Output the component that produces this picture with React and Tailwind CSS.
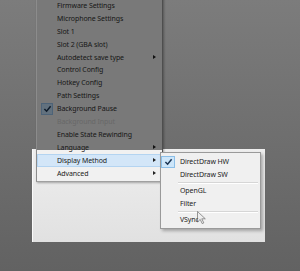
import React from 'react'

const mainItems = [
  { label: 'Firmware Settings' },
  { label: 'Microphone Settings' },
  { label: 'Slot 1' },
  { label: 'Slot 2 (GBA slot)' },
  { label: 'Autodetect save type', sub: true },
  { label: 'Control Config' },
  { label: 'Hotkey Config' },
  { label: 'Path Settings' },
  { label: 'Background Pause', checked: true },
  { label: 'Background Input', disabled: true },
  { label: 'Enable State Rewinding' },
  { label: 'Language', sub: true },
  { label: 'Display Method', sub: true, active: true, lit: true },
  { label: 'Advanced', sub: true, lit: true },
]

const displayItems = [
  { label: 'DirectDraw HW', checked: true },
  { label: 'DirectDraw SW' },
  { sep: true },
  { label: 'OpenGL' },
  { label: 'Filter' },
  { sep: true },
  { label: 'VSync' },
]

function Arrow({ lit }) {
  return (
    <span
      className={`block w-0 h-0 border-y-[2.5px] border-y-transparent border-l-[3px] ${
        lit ? 'border-l-[#222]' : 'border-l-[#111]'
      }`}
    />
  )
}

function Check({ lit, w, h }) {
  return (
    <span
      className={`flex items-center justify-center border ${w} ${h} ${
        lit ? 'bg-[#cde6fa] border-[#8cbfe8]' : 'bg-[#62717e] border-[#4d6378]'
      }`}
    >
      <svg width="9" height="8" viewBox="0 0 10 9">
        <path d="M1.5 4.5 L4 7 L8.5 1.5" fill="none" stroke={lit ? '#1c3553' : '#0f1c2b'} strokeWidth="1.7" />
      </svg>
    </span>
  )
}

function MainRow({ item }) {
  let textColor = item.lit ? 'text-[#1c1c1c]' : 'text-[#161616]'
  if (item.disabled) textColor = 'text-[#686868]'
  return (
    <div
      className={`flex items-center h-[12.9px] ${
        item.active ? 'bg-[#d3e6f8] outline outline-[#b4d4f1] -outline-offset-1' : ''
      }`}
    >
      <div className="w-[20px] h-full flex items-center pl-[4px]">
        {item.checked && <Check lit={item.lit} w="w-[12px]" h="h-[12px]" />}
      </div>
      <span className={`flex-1 leading-none ${textColor}`}>{item.label}</span>
      <div className="w-[9px] flex items-center">{item.sub && <Arrow lit={item.lit} />}</div>
    </div>
  )
}

function SubRow({ item }) {
  if (item.sep) {
    return (
      <div className="h-[3px] flex flex-col justify-center pl-[17px] pr-[2px]">
        <div className="border-t border-[#d6d6d6] border-b border-b-white" />
      </div>
    )
  }
  return (
    <div className="flex items-center h-[13px]">
      <div className="w-[19px] h-full flex items-center">
        {item.checked && <Check lit w="w-[14px]" h="h-[12px]" />}
      </div>
      <span className="leading-none text-[#1c1c1c]">{item.label}</span>
    </div>
  )
}

export default function App() {
  return (
    <div
      className="relative w-[300px] h-[271px] overflow-hidden bg-linear-to-b from-[#7c7c7c] to-[#626262] text-[7px] tracking-[-0.1px]"
      style={{ fontFamily: '"Noto Sans", "Open Sans", sans-serif' }}
    >
      {/* lit area behind the open menus */}
      <div className="absolute left-[32px] top-[149px] w-[233px] h-[93px] bg-linear-to-b from-[#eeeeee] to-[#e1e1e1] border-l border-[#fafafa]" />

      {/* main menu: upper part sits in the dimmed area, lower part in the lit one */}
      <div className="absolute left-[36px] top-[-4px] w-[127px] py-[2px] bg-[linear-gradient(to_bottom,#797979_153px,#f1f1f1_153px)] border border-l-[#8c8c8c] border-r-[#4e4e4e] border-b-[#a0a0a0] border-t-[#505050] shadow-[1px_1px_2px_rgba(0,0,0,0.3)]">
        {mainItems.map(item => (
          <MainRow key={item.label} item={item} />
        ))}
      </div>

      {/* Display Method submenu */}
      <div className="absolute left-[160px] top-[152px] w-[101px] py-[2px] bg-[#f0f0f0] border border-[#9a9a9a] shadow-[2px_2px_3px_rgba(0,0,0,0.28)]">
        {displayItems.map((item, i) => (
          <SubRow key={i} item={item} />
        ))}
      </div>

      {/* mouse pointer */}
      <svg className="absolute left-[197px] top-[211px] opacity-75" width="10" height="14" viewBox="0 0 10 14">
        <path d="M0.5 0.5 L0.5 11 L3.2 8.4 L5.2 12.6 L6.8 11.9 L4.8 7.8 L8.3 7.8 Z" fill="#eeeeee" stroke="#555" strokeWidth="0.8" />
      </svg>
    </div>
  )
}
